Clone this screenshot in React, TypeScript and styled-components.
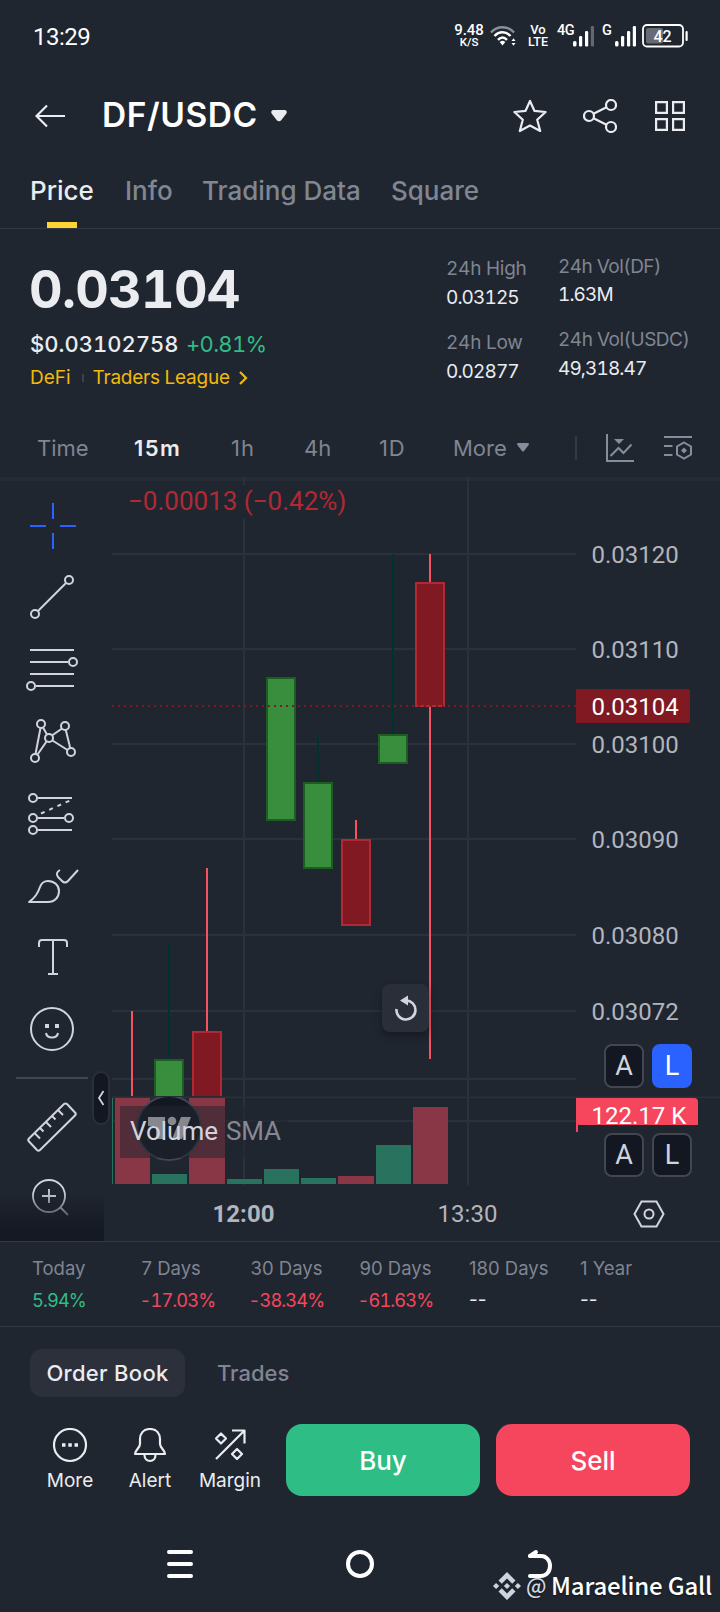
import React from 'react';
import styled, { createGlobalStyle, css } from 'styled-components';

const c = {
  bg: '#202630',
  line: '#333a45',
  grid: '#2b313b',
  text: '#eaecef',
  muted: '#848e9c',
  dim: '#7f8591',
  green: '#2ebd85',
  red: '#f6465d',
  gold: '#f0b90b',
  tool: '#d1d4dc',
  dark: '#131722',
};

const GlobalStyle = createGlobalStyle`
  * { box-sizing: border-box; }
  body { margin: 0; background: ${c.bg}; }
  svg { display: block; flex: none; }
`;

const Screen = styled.div`
  width: 720px;
  height: 1612px;
  overflow: hidden;
  position: relative;
  display: flex;
  flex-direction: column;
  background: ${c.bg};
  color: ${c.text};
  font-family: Inter, 'Liberation Sans', sans-serif;
  white-space: nowrap;
`;

/* ---------- status bar ---------- */
const StatusBar = styled.header`
  height: 72px;
  padding: 0 32px 0 33px;
  display: flex;
  align-items: center;
  font-family: Roboto, sans-serif;
  color: #fff;
`;
const Clock = styled.span`
  font-size: 24px;
  line-height: 30px;
  padding-top: 2px;
  letter-spacing: -0.5px;
  margin-right: auto;
`;
const Stack = styled.div<{ $w: number; $mr: number; $top: number; $bottom: number }>`
  width: ${(p) => p.$w}px;
  margin-right: ${(p) => p.$mr}px;
  display: flex;
  flex-direction: column;
  align-items: center;
  font-weight: 500;
  span:first-child { font-size: ${(p) => p.$top}px; line-height: 12px; }
  span:last-child { font-size: ${(p) => p.$bottom}px; line-height: 12px; }
`;
const WifiIcon = styled.svg`
  margin-right: 10px;
`;
const Net = styled.span<{ $w: number; $ml?: number }>`
  width: ${(p) => p.$w}px;
  margin: 24px 0 0 ${(p) => p.$ml ?? 0}px;
  font-size: 14.5px;
  line-height: 14px;
  font-weight: 500;
  letter-spacing: -0.6px;
  align-self: flex-start;
`;

/* ---------- header ---------- */
const TitleBar = styled.div`
  height: 88px;
  padding: 0 35px 0 35px;
  display: flex;
  align-items: center;
`;
const Pair = styled.h1`
  margin: 0 14px 0 37px;
  width: 155px;
  font-size: 33.5px;
  line-height: 40px;
  font-weight: 600;
  letter-spacing: 0.55px;
  color: #fff;
  padding-bottom: 2px;
`;
const HeaderIcons = styled.div`
  margin-left: auto;
  display: flex;
  align-items: center;
  gap: 36px;
  svg:last-child { margin-left: 2px; }
`;

const Tabs = styled.nav`
  height: 69px;
  padding-left: 30px;
  display: flex;
  border-bottom: 1px solid ${c.line};
`;
const Tab = styled.a<{ $w: number; $active?: boolean }>`
  width: ${(p) => p.$w}px;
  font-size: 26px;
  line-height: 61px;
  font-weight: 500;
  color: ${(p) => (p.$active ? c.text : '#808793')};
  position: relative;
  ${(p) =>
    p.$active &&
    css`
      &::after {
        content: '';
        position: absolute;
        left: 17px;
        bottom: 0;
        width: 30px;
        height: 6px;
        background: #fcd535;
      }
    `}
`;

/* ---------- ticker ---------- */
const Ticker = styled.section`
  height: 189px;
  padding: 24px 0 0 30px;
  display: flex;
  font-variant-numeric: tabular-nums;
`;
const PriceCol = styled.div`
  width: 416px;
`;
const LastPrice = styled.div`
  margin-left: -1px;
  font-size: 52px;
  line-height: 73px;
  font-weight: 700;
  letter-spacing: -0.7px;
`;
const FiatRow = styled.div`
  height: 36px;
  display: flex;
  align-items: center;
  font-size: 22px;
  font-weight: 500;
`;
const Fiat = styled.span`
  width: 156px;
`;
const Change = styled.span`
  color: ${c.green};
  font-weight: 400;
  letter-spacing: -0.7px;
`;
const TagRow = styled.div`
  height: 31px;
  display: flex;
  align-items: center;
  font-size: 19px;
  color: ${c.gold};
`;
const TagBar = styled.i`
  width: 2px;
  height: 8px;
  background: #3a414d;
  margin: 0 9px 0 11px;
`;
const League = styled.span`
  width: 137px;
  letter-spacing: -0.25px;
`;
const StatCol = styled.dl<{ $w: number; $up?: number }>`
  margin: -${(p) => p.$up ?? 0}px 0 0;
  width: ${(p) => p.$w}px;
  padding-top: 1px;
`;
const StatName = styled.dt<{ $ls?: number }>`
  font-size: 19px;
  line-height: 29px;
  color: ${c.dim};
  letter-spacing: ${(p) => p.$ls ?? -0.25}px;
`;
const StatValue = styled.dd<{ $lh: number; $mb?: number }>`
  margin: 0 0 ${(p) => p.$mb ?? 0}px;
  font-size: 19px;
  line-height: ${(p) => p.$lh}px;
  letter-spacing: -0.9px;
`;

/* ---------- intervals ---------- */
const Intervals = styled.div`
  height: 63px;
  padding: 0 28px 0 37px;
  display: flex;
  align-items: center;
  border-bottom: 4px solid #262c36;
`;
const Interval = styled.button<{ $w: number; $active?: boolean; $ls?: number }>`
  all: unset;
  width: ${(p) => p.$w}px;
  font-size: 22px;
  line-height: 30px;
  letter-spacing: ${(p) => p.$ls ?? 0}px;
  font-weight: ${(p) => (p.$active ? 600 : 400)};
  color: ${(p) => (p.$active ? c.text : c.dim)};
`;
const Rule = styled.i`
  width: 2px;
  height: 24px;
  margin: 0 29px 0 46px;
  background: #333a45;
`;

/* ---------- chart ---------- */
const ChartArea = styled.section`
  height: 761px;
  display: flex;
  position: relative;
  border-bottom: 1px solid ${c.line};
  font-family: Roboto, sans-serif;
`;
const Toolbox = styled.aside`
  width: 104px;
  padding-top: 9px;
  position: relative;
  &::after {
    content: '';
    position: absolute;
    left: 0;
    right: 0;
    bottom: 0;
    height: 50px;
    background: linear-gradient(rgba(21, 25, 35, 0), #151923 78%);
  }
`;
const ToolRule = styled.i`
  display: block;
  width: 72px;
  height: 2px;
  margin: 11px 0 12px 16px;
  background: #434651;
`;
const Plot = styled.svg`
  width: 616px;
  height: 760px;
  overflow: visible;
`;
const Collapse = styled.button`
  all: unset;
  box-sizing: border-box;
  position: absolute;
  left: 92px;
  top: 590px;
  width: 18px;
  height: 54px;
  border-radius: 9px;
  border: 2px solid #2a2e39;
  background: ${c.dark};
  display: grid;
  place-items: center;
`;
const Legend = styled.div`
  position: absolute;
  left: 120px;
  top: 625px;
  height: 52px;
  padding: 0 6px 2px 10px;
  display: flex;
  align-items: center;
  gap: 8px;
  font-size: 26px;
  color: ${c.tool};
  background: rgba(32, 38, 48, 0.55);
  em { font-style: normal; color: #868993; letter-spacing: -0.2px; }
`;
const TvBadge = styled.div`
  position: absolute;
  left: 136px;
  top: 616px;
  width: 66px;
  height: 64px;
  overflow: hidden;
  display: flex;
  align-items: flex-end;
`;
const ResetButton = styled.button`
  all: unset;
  position: absolute;
  left: 382px;
  top: 503px;
  width: 47px;
  height: 48px;
  border-radius: 8px;
  background: #2a2e39;
  box-shadow: 0 4px 8px rgba(0, 0, 0, 0.35);
  display: grid;
  place-items: center;
`;
const ScaleButtons = styled.div<{ $top: number }>`
  position: absolute;
  left: 604px;
  top: ${(p) => p.$top}px;
  display: flex;
  gap: 8px;
`;
const ScaleButton = styled.button<{ $on?: boolean }>`
  all: unset;
  box-sizing: border-box;
  width: 40px;
  height: 44px;
  border-radius: 8px;
  border: 2px solid ${(p) => (p.$on ? '#2962ff' : '#434651')};
  background: ${(p) => (p.$on ? '#2962ff' : c.dark)};
  color: ${(p) => (p.$on ? '#fff' : c.tool)};
  text-align: center;
  font-size: 27px;
  line-height: 40px;
`;

/* ---------- performance ---------- */
type Tone = 'up' | 'down' | 'none';

const Performance = styled.section`
  height: 85px;
  padding: 12px 0 0 32px;
  display: grid;
  grid-template-columns: 109.5px 109px 109px 109.5px 111px 1fr;
  border-bottom: 1px solid ${c.line};
`;
const PerfName = styled.div`
  margin-bottom: 1px;
  font-size: 18.5px;
  line-height: 29px;
  color: ${c.dim};
`;
const PerfValue = styled.div<{ $tone: Tone }>`
  line-height: 32px;
  ${(p) =>
    p.$tone === 'none'
      ? css`
          font-size: 19px;
          color: ${c.text};
        `
      : css`
          margin-left: ${p.$tone === 'down' ? -2 : 0}px;
          font-size: 18.3px;
          font-variant-numeric: tabular-nums;
          letter-spacing: -0.9px;
          color: ${p.$tone === 'up' ? c.green : c.red};
        `}
`;

const BookTabs = styled.div`
  height: 92px;
  padding: 22px 0 0 30px;
  display: flex;
  gap: 32px;
`;
const BookTab = styled.button<{ $active?: boolean }>`
  all: unset;
  box-sizing: border-box;
  height: 48px;
  width: ${(p) => (p.$active ? '155px' : 'auto')};
  text-align: ${(p) => (p.$active ? 'center' : 'left')};
  border-radius: 12px;
  background: ${(p) => (p.$active ? '#2b303b' : 'none')};
  color: ${(p) => (p.$active ? c.text : c.dim)};
  font-size: 22px;
  line-height: 48px;
  font-weight: 500;
  letter-spacing: ${(p) => (p.$active ? 0.3 : 0)}px;
`;

/* ---------- actions ---------- */
const Actions = styled.footer`
  height: 86px;
  padding: 5px 30px 0;
  display: flex;
`;
const Action = styled.button`
  all: unset;
  width: 80px;
  padding-top: 4px;
  display: flex;
  flex-direction: column;
  align-items: center;
  font-size: 19px;
  line-height: 30px;
  svg { margin-bottom: 2px; }
`;
const Trade = styled.button<{ $side: 'buy' | 'sell' }>`
  all: unset;
  width: 194px;
  height: 72px;
  margin-left: 16px;
  border-radius: 16px;
  background: ${(p) => (p.$side === 'buy' ? c.green : c.red)};
  color: #fff;
  text-align: center;
  font-size: 26px;
  line-height: 73px;
  font-weight: 500;
`;

const SystemNav = styled.div`
  flex: 1;
  padding: 44px 165px 0;
  display: flex;
  justify-content: space-between;
  align-items: flex-start;
`;
const Watermark = styled.div`
  position: absolute;
  left: 493px;
  bottom: 6px;
  height: 40px;
  display: flex;
  align-items: center;
  color: #fff;
  font-family: 'Noto Sans CJK SC', sans-serif;
  font-weight: 500;
  font-size: 24px;
  line-height: 40px;
  letter-spacing: -0.15px;
  text-shadow: 0 1px 2px rgba(0, 0, 0, 0.5);
`;
const At = styled.span`
  width: 20px;
  margin: 0 5px;
  padding-bottom: 2px;
  font-size: 21px;
  color: #d5d8e0;
`;
const UserName = styled.span`
  padding-bottom: 3px;
`;

/* ---------- tool icons ---------- */
const toolIcons: React.ReactNode[] = [
  <g key="cross" stroke="#2962ff"><path d="M53 13v16M53 43v16M30 36h16M60 36h16" /></g>,
  <g key="line"><circle cx="35" cy="52" r="4" /><circle cx="69" cy="18" r="4" /><path d="M38 49L66 21" /></g>,
  <g key="fib"><path d="M30 16h44M30 28h38M30 40h44M36 52h38" /><circle cx="73" cy="28" r="4" /><circle cx="31" cy="52" r="4" /></g>,
  <g key="pattern">
    <circle cx="41" cy="18" r="4" /><circle cx="65" cy="20" r="4" /><circle cx="49" cy="32" r="4" /><circle cx="35" cy="52" r="4" /><circle cx="71" cy="46" r="4" />
    <path d="M40.5 22L35.500 48M43 21.500l4 7M52 29.500L62 22.500M65.800 24L70.200 42M67.500 44L52.500 34.500M46.500 35.500L37.500 48.500" />
  </g>,
  <g key="forecast">
    <circle cx="33" cy="20" r="4" /><circle cx="33" cy="40" r="4" /><circle cx="33" cy="52" r="4" /><circle cx="69" cy="40" r="4" />
    <path d="M38 20h34M38 40h26M38 52h34" /><path d="M41 35.500L70 22.500" strokeDasharray="4 5" />
  </g>,
  <g key="brush"><path d="M29 52h19c7 0 11-5 11-11s-5-10-11-10c-4 0-7 3-8 6-2 6-5 11-11 15z" /><path d="M78 20L68 31q-3 3-6 0l-4-4q-3-4 2-7" /></g>,
  <g key="text"><path d="M39 25v-4q0-3 3-3h22q3 0 3 3v4M53 18v34M48 52h10" /></g>,
  <g key="smile"><circle cx="52" cy="35" r="21" /><path d="M46 39c1 6 11 6 12 0" /><path d="M45 32h4M55 32h4" strokeWidth="4" /></g>,
];
const measureIcons: React.ReactNode[] = [
  <g key="ruler"><path d="M64 13q1.500-1 3 0l8 8.500q1.500 1.500 0 3L40 59q-1.500 1.500-3 0l-8-8.500q-1.500-1.500 0-3zM58 19l5 5M52 25l3.500 3.500M46 31l5 5M40 37l3.500 3.500M35 42.500l5 5" /></g>,
  <g key="zoom" strokeWidth="1.8"><circle cx="49" cy="33" r="16" /><path d="M49 26v14M42 33h14M60.500 44.500L68 52" /></g>,
];

const ToolIcon = ({ children }: { children: React.ReactNode }) => (
  <svg width="104" height="72" fill="none" stroke={c.tool} strokeWidth="2" strokeLinejoin="round">
    {children}
  </svg>
);

/* ---------- chart data, in chart-area pixels ---------- */
type Candle = { x: number; top: number; bottom: number; high: number; low: number; up: boolean };
const candles: Candle[] = [
  { x: 132, top: 640, bottom: 640, high: 530, low: 615, up: false },
  { x: 169, top: 578, bottom: 640, high: 463, low: 578, up: true },
  { x: 207, top: 550, bottom: 640, high: 387, low: 550, up: false },
  { x: 281, top: 196, bottom: 340, high: 196, low: 340, up: true },
  { x: 318, top: 301, bottom: 388, high: 253, low: 301, up: true },
  { x: 356, top: 358, bottom: 445, high: 339, low: 358, up: false },
  { x: 393, top: 253, bottom: 283, high: 73, low: 253, up: true },
  { x: 430, top: 101, bottom: 226, high: 73, low: 578, up: false },
];
const volumes = [
  { x: 112, w: 1, top: 617, up: true },
  { x: 115, w: 35, top: 617, up: false },
  { x: 152, w: 35, top: 693, up: true },
  { x: 189, w: 36, top: 617, up: false },
  { x: 227, w: 35, top: 698, up: true },
  { x: 264, w: 35, top: 688, up: true },
  { x: 301, w: 35, top: 697, up: true },
  { x: 338, w: 36, top: 695, up: false },
  { x: 376, w: 35, top: 664, up: true },
  { x: 413, w: 35, top: 626, up: false },
];
const gridLines = [73, 168, 263, 358, 454, 530, 598, 640];
const axis = [
  { y: 73, label: '0.03120' },
  { y: 168, label: '0.03110' },
  { y: 263, label: '0.03100' },
  { y: 358, label: '0.03090' },
  { y: 454, label: '0.03080' },
  { y: 530, label: '0.03072' },
];

const CandleChart = () => (
  <Plot viewBox="104 0 616 760" fontFamily="Roboto, sans-serif">
    <defs>
      <clipPath id="pricePane"><rect x="104" y="0" width="616" height="615" /></clipPath>
      <clipPath id="volumeTag"><rect x="576" y="617" width="124" height="27" /></clipPath>
    </defs>
    <g fill={c.grid}>
      {gridLines.map((y) => <rect key={y} x="112" y={y - 1} width="464" height="2" />)}
      <rect x="112" y="615.5" width="608" height="1.5" />
      <rect x="243" y="-3" width="2" height="707" />
      <rect x="467" y="-3" width="2" height="707" />
    </g>
    <rect x="122" y="4" width="230" height="34" fill={c.bg} />
    <text x="128" y="29" fontSize="26" fill="#b22833">−0.00013 (−0.42%)</text>
    <g clipPath="url(#pricePane)">
      {candles.map((k) => (
        <g key={k.x}>
          <rect x={k.x - 1} y={k.high} width="2" height={k.low - k.high} fill={k.up ? '#00332a' : '#f7525f'} />
          {k.bottom > k.top && (
            <rect
              x={k.x - 14} y={k.top + 1} width="28" height={k.bottom - k.top - 2}
              fill={k.up ? '#388e3c' : '#801922'} stroke={k.up ? '#1b5e20' : '#b22833'} strokeWidth="2"
            />
          )}
        </g>
      ))}
    </g>
    <path d="M112 225H576" stroke="#801922" strokeWidth="2" strokeDasharray="2 4" />
    {volumes.map((v) => (
      <rect key={v.x} x={v.x} y={v.top} width={v.w} height={703 - v.top} fill={v.up ? '#29735e' : '#893646'} />
    ))}
    <g fontSize="24" fill="#b2b5be">
      {axis.map((a) => <text key={a.y} x="591.500" y={a.y + 8.500}>{a.label}</text>)}
      <text x="243.500" y="741" textAnchor="middle" fontWeight="700">12:00</text>
      <text x="467.500" y="741" textAnchor="middle">13:30</text>
    </g>
    <path d="M576 208h112q2 0 2 2v30q0 2-2 2H576z" fill="#801922" />
    <text x="591.500" y="233.500" fontSize="24" fill="#fff">0.03104</text>
    <path d="M576 617h118q4 0 4 4v23H578v7h-2z" fill={c.red} />
    <text x="591.500" y="643" fontSize="24" fill="#fff" clipPath="url(#volumeTag)">122.17 K</text>
    <g fill="none" stroke={c.tool} strokeWidth="2">
      <path d="M641.500 720.500h15l7 12.500-7 12.500h-15l-7-12.500z" /><circle cx="649" cy="733" r="4.500" />
    </g>
  </Plot>
);

const perf: { name: string; value: string; tone: Tone }[] = [
  { name: 'Today', value: '5.94%', tone: 'up' },
  { name: '7 Days', value: '-17.03%', tone: 'down' },
  { name: '30 Days', value: '-38.34%', tone: 'down' },
  { name: '90 Days', value: '-61.63%', tone: 'down' },
  { name: '180 Days', value: '--', tone: 'none' },
  { name: '1 Year', value: '--', tone: 'none' },
];

const Signal = ({ weak }: { weak?: boolean }) => (
  <svg width="21" height="22" fill="#fff">
    <rect x="0" y="16" width="3.500" height="5.500" rx="1.500" />
    <rect x="6" y="11" width="3.200" height="10.500" rx="1.200" />
    <rect x="12" y="6" width="3.200" height="15.500" rx="1.200" />
    <rect x="17.800" y="1" width="3.200" height="20.500" rx="1.200" fill={weak ? '#63676f' : '#fff'} />
  </svg>
);

export default function App() {
  return (
    <Screen>
      <GlobalStyle />
      <StatusBar>
        <Clock>13:29</Clock>
        <Stack $w={30} $mr={6} $top={15} $bottom={11.5}><span>9.48</span><span>K/S</span></Stack>
        <WifiIcon width="27" height="22" viewBox="0 0 27 22" fill="none" stroke="#fff" strokeWidth="2.4">
          <path d="M1 7.500C7 .5 18 .5 24 7.500" stroke="#8b8f96" />
          <path d="M4.500 11c4.500-5 11.500-5 16 0M8 14.800c3-3 6-3 9 0" />
          <path d="M9.700 17q2.800-2.500 5.600 0l-2.800 3.500z" fill="#fff" stroke="none" />
          <path d="M21.500 16l2-2.800 2 2.800zM21.500 18l2 2.800 2-2.800z" fill="#fff" stroke="none" />
        </WifiIcon>
        <Stack $w={22} $mr={8} $top={13} $bottom={12.5}><span>Vo</span><span>LTE</span></Stack>
        <Net $w={16}>4G</Net>
        <Signal weak />
        <Net $w={13} $ml={8}>G</Net>
        <Signal />
        <svg width="52" height="24" viewBox="-6 0 52 24">
          <rect x="1" y="1" width="40" height="21.500" rx="4" fill="none" stroke="#fff" strokeWidth="1.800" />
          <rect x="4" y="4" width="17" height="15.500" rx="2" fill="#666b74" />
          <rect x="43.500" y="7" width="2.200" height="10" rx="1" fill="#fff" />
          <text x="20.500" y="17.500" textAnchor="middle" fontSize="16" fontWeight="500" fill="#fff">42</text>
        </svg>
      </StatusBar>

      <TitleBar>
        <svg width="30" height="24" fill="none" stroke={c.text} strokeWidth="2.2"><path d="M12 1.500L1.500 12 12 22.500M1.500 12H30" /></svg>
        <Pair>DF/USDC</Pair>
        <svg width="16" height="12" fill={c.text}><path d="M2 0h12q3 1 1 4l-5 6.500q-2 1.500-4 0L1 4Q-1 1 2 0z" /></svg>
        <HeaderIcons>
          <svg width="34" height="34" fill="none" stroke={c.text} strokeWidth="2.2" strokeLinejoin="round">
            <path d="M17 2l4.400 9.800 11.200 1.200-8.400 7.800 3 11.200L17 26.500 6.800 32l3-11.200L1.400 13l11.200-1.200z" />
          </svg>
          <svg width="34" height="34" fill="none" stroke={c.text} strokeWidth="2.200">
            <circle cx="6" cy="17" r="5" /><circle cx="28" cy="6" r="5" /><circle cx="28" cy="28" r="5" /><path d="M10.500 14.800l13-6.500M10.500 19.200l13 6.500" />
          </svg>
          <svg width="30" height="30" fill="none" stroke={c.text} strokeWidth="2.200">
            <path d="M1.100 1.100h10.800v10.800H1.100zM18.100 1.100h10.800v10.800H18.100zM1.100 18.100h10.800v10.800H1.100zM18.100 18.100h10.800v10.800H18.100z" />
          </svg>
        </HeaderIcons>
      </TitleBar>

      <Tabs>
        <Tab $w={95} $active>Price</Tab>
        <Tab $w={77}>Info</Tab>
        <Tab $w={189}>Trading Data</Tab>
        <Tab $w={100}>Square</Tab>
      </Tabs>

      <Ticker>
        <PriceCol>
          <LastPrice>0.03104</LastPrice>
          <FiatRow><Fiat>$0.03102758</Fiat><Change>+0.81%</Change></FiatRow>
          <TagRow>
            DeFi<TagBar /><League>Traders League</League>
            <svg width="20" height="14" fill="none" stroke={c.gold} strokeWidth="2.200"><path d="M10 1l6 6-6 6" /></svg>
          </TagRow>
        </PriceCol>
        <StatCol $w={112}>
          <StatName>24h High</StatName><StatValue $lh={30} $mb={15}>0.03125</StatValue>
          <StatName>24h Low</StatName><StatValue $lh={30}>0.02877</StatValue>
        </StatCol>
        <StatCol $w={150} $up={2}>
          <StatName $ls={-0.55}>24h Vol(DF)</StatName><StatValue $lh={28} $mb={16}>1.63M</StatValue>
          <StatName $ls={-0.5}>24h Vol(USDC)</StatName><StatValue $lh={30}>49,318.47</StatValue>
        </StatCol>
      </Ticker>

      <Intervals>
        <Interval $w={97}>Time</Interval>
        <Interval $w={97} $active $ls={1.4}>15m</Interval>
        <Interval $w={73} $ls={1}>1h</Interval>
        <Interval $w={75}>4h</Interval>
        <Interval $w={74} $ls={0.7}>1D</Interval>
        <Interval $w={64}>More</Interval>
        <svg width="12" height="9" fill={c.muted}><path d="M1 0h10q1 0 1 1.500l-5 6.500q-1 1-2 0l-5-6.500Q0 0 1 0z" /></svg>
        <Rule />
        <svg width="28" height="28" fill="none" stroke={c.muted} strokeWidth="2">
          <path d="M1 0v27h27M4.500 22l8-8 5 5 8-8.500" /><path d="M8 5h10l-5 5z" fill={c.muted} stroke="none" />
        </svg>
        <svg width="58" height="26" viewBox="-30 0 58 26" fill="none" stroke={c.muted} strokeWidth="2">
          <path d="M0 2h28M0 11h8.500M0 20h8.500M20 7.500l7 4v8l-7 4-7-4v-8z" /><path d="M20 12.500l3 3-3 3-3-3z" fill={c.muted} stroke="none" />
        </svg>
      </Intervals>

      <ChartArea>
        <Toolbox>
          {toolIcons.map((icon, i) => <ToolIcon key={i}>{icon}</ToolIcon>)}
          <ToolRule />
          {measureIcons.map((icon, i) => <ToolIcon key={i}>{icon}</ToolIcon>)}
        </Toolbox>
        <CandleChart />
        <TvBadge>
          <svg width="66" height="66" viewBox="0 0 66 66">
            <circle cx="33" cy="33" r="32" fill="#131722" stroke="#434651" strokeWidth="2" />
            <g fill="#fff"><path d="M12 22h17v22h-9V31h-8z" /><circle cx="36" cy="26" r="4.300" /><path d="M45 22h10l-9 22H36z" /></g>
          </svg>
        </TvBadge>
        <Legend>Volume <em>SMA</em></Legend>
        <Collapse>
          <svg width="8" height="16" fill="none" stroke={c.tool} strokeWidth="1.800"><path d="M6.500 1L2 8l4.500 7" /></svg>
        </Collapse>
        <ResetButton>
          <svg width="24" height="26" viewBox="0 0 24 26" fill="none" stroke={c.tool} strokeWidth="2.600">
            <path d="M2.500 14a9.500 9.500 0 1 0 9.500-8.500" /><path d="M6 5.500L14 .5v10z" fill={c.tool} stroke="none" />
          </svg>
        </ResetButton>
        <ScaleButtons $top={563}><ScaleButton>A</ScaleButton><ScaleButton $on>L</ScaleButton></ScaleButtons>
        <ScaleButtons $top={652}><ScaleButton>A</ScaleButton><ScaleButton>L</ScaleButton></ScaleButtons>
      </ChartArea>

      <Performance>
        {perf.map((p) => (
          <div key={p.name}>
            <PerfName>{p.name}</PerfName>
            <PerfValue $tone={p.tone}>{p.value}</PerfValue>
          </div>
        ))}
      </Performance>

      <BookTabs>
        <BookTab $active>Order Book</BookTab>
        <BookTab>Trades</BookTab>
      </BookTabs>

      <Actions>
        <Action>
          <svg width="36" height="36" fill="none" stroke={c.text} strokeWidth="2.200"><circle cx="18" cy="17" r="16" /><path d="M10 17h3.500M16.300 17h3.500M22.500 17h3.500" strokeWidth="3.500" /></svg>
          More
        </Action>
        <Action>
          <svg width="36" height="36" fill="none" stroke={c.text} strokeWidth="2.200" strokeLinejoin="round">
            <path d="M18 1c-7 0-10 5-10 10v5c0 4-5 6-5 10h30c0-4-5-6-5-10v-5c0-5-3-10-10-10z" /><path d="M12.500 27c0 8 11 8 11 0" />
          </svg>
          Alert
        </Action>
        <Action>
          <svg width="36" height="36" fill="none" stroke={c.text} strokeWidth="2.200" strokeLinejoin="round">
            <path d="M4 31L32 3M20 2.500h12.500V15.500M9 5.500l5 5-5 5-5-5zM25 21l5 5-5 5-5-5z" />
          </svg>
          Margin
        </Action>
        <Trade $side="buy">Buy</Trade>
        <Trade $side="sell">Sell</Trade>
      </Actions>

      <SystemNav>
        <svg width="30" height="30" stroke="#fff" strokeWidth="4" strokeLinecap="round"><path d="M4 3h22M4 15h22M4 27h22" /></svg>
        <svg width="30" height="30" fill="none" stroke="#fff" strokeWidth="4"><circle cx="15" cy="15" r="12" /></svg>
        <svg width="30" height="30" fill="none" stroke="#fff" strokeWidth="4" strokeLinejoin="round" strokeLinecap="round">
          <path d="M5 7h11c5 0 9 4 9 10s-4 10-9 10H5" /><path d="M5 7l6-4" />
        </svg>
      </SystemNav>

      <Watermark>
        <svg width="28" height="28" viewBox="0 0 28 28" fill="#cfd3dc">
          <path d="M14 0l8.500 8.500-3.300 3.300L14 6.600l-5.200 5.200-3.300-3.300zM14 28l8.500-8.500-3.300-3.300L14 21.400l-5.200-5.200-3.300 3.300zM14 10.900l3.100 3.100-3.100 3.100-3.100-3.100zM3.100 10.900L6.200 14l-3.100 3.100L0 14zM24.900 10.900L28 14l-3.100 3.100-3.100-3.100z" />
        </svg>
        <At>@</At><UserName>Maraeline Gall</UserName>
      </Watermark>
    </Screen>
  );
}
